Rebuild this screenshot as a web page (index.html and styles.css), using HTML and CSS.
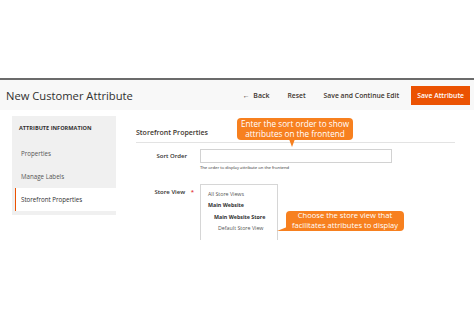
FILE: index.html
```html
<!DOCTYPE html>
<html lang="en">
<head>
  <meta charset="UTF-8" />
  <title>New Customer Attribute</title>
  <link rel="stylesheet" href="styles.css">
</head>
<body>

<div class="top-space"></div>

<header class="page-header">
  <h1>New Customer Attribute</h1>
  <div class="actions">
    <span class="action back">&larr;&nbsp; Back</span>
    <span class="action">Reset</span>
    <span class="action continue">Save and Continue Edit</span>
    <span class="btn-primary">Save Attribute</span>
  </div>
</header>

<div class="content">
  <aside class="sidebar">
    <div class="side-title">ATTRIBUTE INFORMATION</div>
    <div class="side-item">Properties</div>
    <div class="side-item">Manage Labels</div>
    <div class="side-item active">Storefront Properties</div>
  </aside>

  <main class="main">
    <h2 class="section-title">Storefront Properties</h2>

    <div class="field">
      <label class="field-label">Sort Order</label>
      <div class="field-control">
        <div class="input"></div>
        <div class="note">The order to display attribute on the frontend</div>
      </div>
    </div>

    <div class="field store">
      <label class="field-label">Store View <span class="req">*</span></label>
      <div class="field-control">
        <div class="multiselect">
          <div class="opt">All Store Views</div>
          <div class="opt group">Main Website</div>
          <div class="opt group sub">Main Website Store</div>
          <div class="opt view">Default Store View</div>
        </div>
      </div>
    </div>
  </main>

  <!-- callouts laid over the form -->
  <div class="tip tip-sort">Enter the sort order to show<br>attributes on the frontend</div>
  <div class="tip tip-store">Choose the store view that<br>facilitates attributes to display</div>
</div>

</body>
</html>
```

FILE: styles.css
```css
* {
  margin: 0;
  padding: 0;
  box-sizing: border-box;
}

body {
  background: #fff;
  font-family: "Open Sans", "Noto Sans", sans-serif;
  color: #333;
  width: 474px;
  height: 316px;
  overflow: hidden;
}

.top-space {
  height: 78px;
}

.page-header {
  border-top: 2px solid #6b6b6b;
  background: #f8f8f8;
  height: 32px;
  display: flex;
  align-items: center;
  padding: 0 4px 0 6px;
}

h1 {
  font-size: 11.2px;
  font-weight: 400;
  color: #303030;
}

.actions {
  margin-left: auto;
  display: flex;
  align-items: center;
}

.action {
  font-size: 6.8px;
  font-weight: 600;
  color: #41362f;
  margin-right: 18px;
}

.action.back {
  font-size: 7px;
}

.action.continue {
  margin-right: 12px;
}

.btn-primary {
  background: #eb5202;
  color: #fff;
  font-size: 6.8px;
  font-weight: 600;
  padding: 0 6px;
  height: 19px;
  display: flex;
  align-items: center;
}

.content {
  position: relative;
  display: flex;
  align-items: flex-start;
  padding: 6px 0 0 12px;
  height: 130px;
  overflow: hidden;
}

/* left tabs */
.sidebar {
  width: 104px;
  height: 99px;
  background: #f0f0f0;
  padding-top: 8px;
}

.side-title {
  font-size: 5.6px;
  font-weight: 700;
  color: #303030;
  padding: 0 0 0 7px;
  height: 15px;
  margin-bottom: 3px;
}

.side-item {
  font-size: 6.2px;
  color: #555;
  height: 23px;
  line-height: 23px;
  margin-left: 3px;
  padding-left: 5px;
  border-left: 1px solid transparent;
}

.side-item.active {
  background: #fff;
  color: #303030;
  border-left: 1px solid #eb5202;
}

/* form */
.main {
  margin-left: 20px;
  width: 319px;
}

.section-title {
  font-size: 7px;
  font-weight: 600;
  color: #41362f;
  padding: 12px 0 5px;
  border-bottom: 1px solid #e3e3e3;
}

.field {
  display: flex;
  margin-top: 6px;
}

.field-label {
  width: 64px;
  text-align: right;
  font-size: 6px;
  font-weight: 600;
  color: #303030;
  padding: 3px 13px 0 0;
}

.field-control {
  width: 192px;
}

.input {
  height: 14px;
  border: 1px solid #d2d2d2;
  background: #fff;
}

.note {
  font-size: 4.2px;
  color: #303030;
  margin-top: 2px;
}

.field.store {
  margin-top: 14px;
}

.field.store .field-label {
  padding: 4px 6px 0 0;
}

.req {
  color: #e22626;
  margin-left: 4px;
}

.multiselect {
  width: 78px;
  height: 70px;
  border: 1px solid #d6d6d6;
  padding: 5px 0 0 7px;
}

.opt {
  font-size: 5.3px;
  color: #555;
  height: 11.3px;
}

.opt.group {
  font-weight: 700;
  color: #303030;
}

.opt.sub {
  padding-left: 6px;
}

.opt.view {
  padding-left: 10px;
}

/* orange callouts */
.tip {
  position: absolute;
  background: #f7801f;
  color: #fff;
  border-radius: 4px;
  text-align: center;
  line-height: 10px;
}

.tip::after {
  content: "";
  position: absolute;
  border-style: solid;
}

.tip-sort {
  left: 237px;
  top: 8px;
  width: 116px;
  height: 22px;
  font-size: 8.2px;
  padding-top: 1px;
}

.tip-sort::after {
  left: 52px;
  top: 21px;
  border-width: 8px 3px 0 3px;
  border-color: #f7801f transparent transparent transparent;
}

.tip-store {
  left: 286px;
  top: 101px;
  width: 118px;
  height: 20px;
  font-size: 7.6px;
  line-height: 9.5px;
  border-bottom-left-radius: 0;
}

.tip-store::after {
  left: -9px;
  bottom: 0;
  border-width: 0 0 4px 10px;
  border-color: transparent transparent #f7801f transparent;
}
```
